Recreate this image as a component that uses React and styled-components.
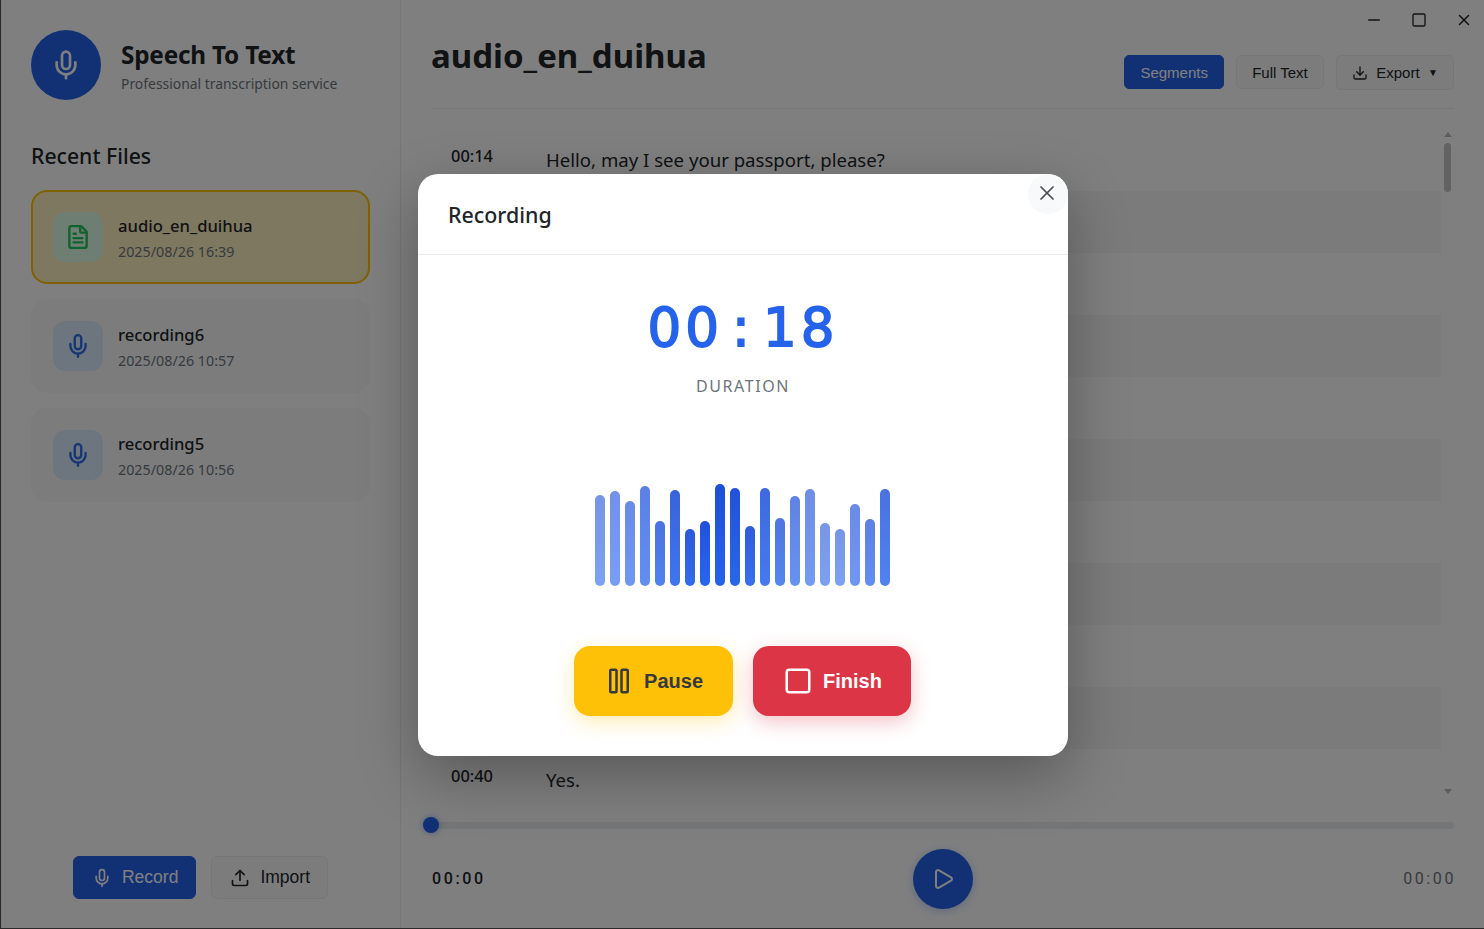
import styled, { createGlobalStyle } from "styled-components";
import { Mic, FileText, Download, Upload, Play, Pause, Square, X, Minus } from "lucide-react";

const files = [
  { name: "audio_en_duihua", date: "2025/08/26 16:39", kind: "audio", active: true },
  { name: "recording6", date: "2025/08/26 10:57", kind: "mic" },
  { name: "recording5", date: "2025/08/26 10:56", kind: "mic" },
];

// rows between these two sit behind the dialog
const segments = [
  ["00:14", "Hello, may I see your passport, please?"],
  [], [], [], [], [], [], [], [], [],
  ["00:40", "Yes."],
];

const bars = [
  [91, 0.6], [95, 0.62], [85, 0.66], [100, 0.72], [65, 0.8],
  [96, 0.88], [57, 0.94], [65, 0.98], [102, 1], [98, 0.98],
  [60, 0.92], [98, 0.85], [68, 0.78], [90, 0.7], [97, 0.64],
  [63, 0.6], [57, 0.6], [82, 0.66], [67, 0.72], [97, 0.8],
];

function App() {
  return (
    <>
      <GlobalStyle />
      <Window>
        <Sidebar>
          <Brand>
            <Logo>
              <Mic size={32} strokeWidth={2} />
            </Logo>
            <BrandText>
              <BrandName>Speech To Text</BrandName>
              <BrandSub>Professional transcription service</BrandSub>
            </BrandText>
          </Brand>
          <SectionTitle>Recent Files</SectionTitle>
          <FileList>
            {files.map((f) => (
              <FileCard key={f.name} $active={f.active}>
                <FileIcon $kind={f.kind}>
                  {f.kind === "audio" ? (
                    <FileText size={26} strokeWidth={2.2} />
                  ) : (
                    <Mic size={26} strokeWidth={2.2} />
                  )}
                </FileIcon>
                <FileMeta>
                  <FileName>{f.name}</FileName>
                  <FileDate>{f.date}</FileDate>
                </FileMeta>
              </FileCard>
            ))}
          </FileList>
          <SideActions>
            <SideButton $primary>
              <Mic size={20} />
              Record
            </SideButton>
            <SideButton>
              <Upload size={20} />
              Import
            </SideButton>
          </SideActions>
        </Sidebar>

        <Main>
          <WindowControls>
            <Minus size={18} />
            <Square size={16} />
            <X size={18} />
          </WindowControls>
          <Header>
            <Title>audio_en_duihua</Title>
            <HeaderActions>
              <ViewButton $primary>Segments</ViewButton>
              <ViewButton>Full Text</ViewButton>
              <ViewButton $tall>
                <Download size={16} />
                Export
                <Caret>▼</Caret>
              </ViewButton>
            </HeaderActions>
          </Header>
          <Transcript>
            <Rows>
              {segments.map(([time, text], i) => (
                <Row key={i} $striped={i % 2 === 1}>
                  <RowTime>{time}</RowTime>
                  <RowText>{text}</RowText>
                </Row>
              ))}
            </Rows>
            <ScrollBar>
              <ArrowUp />
              <Thumb />
              <ArrowDown />
            </ScrollBar>
          </Transcript>
          <Player>
            <SeekTrack>
              <SeekThumb />
            </SeekTrack>
            <PlayerRow>
              <Time>00:00</Time>
              <PlayButton>
                <Play size={24} />
              </PlayButton>
              <Time $muted>00:00</Time>
            </PlayerRow>
          </Player>
        </Main>

        <Overlay>
          <Modal>
            <ModalHeader>
              <ModalTitle>Recording</ModalTitle>
              <CloseButton>
                <X size={24} strokeWidth={1.75} />
              </CloseButton>
            </ModalHeader>
            <ModalBody>
              <Timer>
                00<TimerColon>:</TimerColon>18
              </Timer>
              <TimerLabel>DURATION</TimerLabel>
              <Wave>
                {bars.map(([h, o], i) => (
                  <WaveBar key={i} style={{ height: h, opacity: o }} />
                ))}
              </Wave>
              <ModalActions>
                <RecordButton $kind="pause">
                  <Pause size={30} />
                  Pause
                </RecordButton>
                <RecordButton $kind="finish">
                  <Square size={30} />
                  Finish
                </RecordButton>
              </ModalActions>
            </ModalBody>
          </Modal>
        </Overlay>
      </Window>
    </>
  );
}

const GlobalStyle = createGlobalStyle`
  * {
    box-sizing: border-box;
  }
  html,
  body {
    margin: 0;
    height: 100%;
    overflow: hidden;
    background: #fff;
    font-family: "Noto Sans", "Open Sans", sans-serif;
    color: #212529;
  }
  #root {
    height: 100%;
  }
`;

const Window = styled.div`
  position: relative;
  display: flex;
  height: 929px;
  background: #fff;
  border-left: 1px solid #555;
  border-bottom: 1px solid #555;
`;

const Sidebar = styled.aside`
  width: 400px;
  flex: none;
  display: flex;
  flex-direction: column;
  padding: 30px 30px 29px;
  border-right: 1px solid #e9ecef;
`;

const Brand = styled.div`
  display: flex;
  align-items: center;
  gap: 20px;
`;

const Logo = styled.div`
  width: 70px;
  height: 70px;
  border-radius: 50%;
  background: #2563eb;
  color: #fff;
  display: flex;
  align-items: center;
  justify-content: center;
`;

const BrandText = styled.div`
  padding-top: 5px;
`;

const BrandName = styled.div`
  font-size: 24.3px;
  font-weight: 700;
  line-height: 32px;
  letter-spacing: -0.2px;
`;

const BrandSub = styled.div`
  margin-top: 1px;
  font-size: 13.9px;
  line-height: 24px;
  color: #6c757d;
`;

const SectionTitle = styled.h2`
  margin: 40px 0 18px;
  font-size: 21.2px;
  line-height: 32px;
  font-weight: 500;
`;

const FileList = styled.div`
  display: flex;
  flex-direction: column;
  gap: 15px;
  flex: 1;
`;

const FileCard = styled.div`
  height: 94px;
  display: flex;
  align-items: center;
  gap: 15px;
  padding: 0 20px;
  border-radius: 16px;
  border: 2px solid ${(p) => (p.$active ? "#ffc107" : "#f8f9fa")};
  background: ${(p) => (p.$active ? "#fff0c0" : "#f8f9fa")};
`;

const FileIcon = styled.div`
  width: 50px;
  height: 50px;
  border-radius: 12px;
  display: flex;
  align-items: center;
  justify-content: center;
  background: ${(p) => (p.$kind === "audio" ? "#dcfce7" : "#dbeafe")};
  color: ${(p) => (p.$kind === "audio" ? "#22c55e" : "#2f6fe8")};
`;

const FileMeta = styled.div`
  padding-top: 4px;
`;

const FileName = styled.div`
  font-size: 16.6px;
  line-height: 26px;
  font-weight: 500;
`;

const FileDate = styled.div`
  font-size: 14.3px;
  line-height: 26px;
  color: #6c757d;
`;

const SideActions = styled.div`
  display: flex;
  justify-content: center;
  gap: 15px;
`;

const SideButton = styled.button`
  height: 43px;
  display: flex;
  align-items: center;
  gap: 10px;
  padding: 0 17px 0 18px;
  border-radius: 6px;
  border: 1px solid ${(p) => (p.$primary ? "#2563eb" : "#e9ecef")};
  background: ${(p) => (p.$primary ? "#2563eb" : "#f8f9fa")};
  color: ${(p) => (p.$primary ? "#fff" : "#212529")};
  font-family: "Liberation Sans", Arial, sans-serif;
  font-size: 17.5px;
`;

const Main = styled.main`
  position: relative;
  flex: 1;
  min-width: 0;
  display: flex;
  flex-direction: column;
  padding: 0 30px 19px 30px;
`;

const WindowControls = styled.div`
  position: absolute;
  top: 11px;
  right: 11px;
  display: flex;
  align-items: center;
  gap: 28px;
  color: #212529;
`;

const Header = styled.header`
  height: 109px;
  flex: none;
  display: flex;
  justify-content: space-between;
  border-bottom: 1px solid #e9ecef;
`;

const Title = styled.h1`
  margin: 34px 0 0;
  font-size: 33px;
  line-height: 44px;
  font-weight: 700;
`;

const HeaderActions = styled.div`
  display: flex;
  align-items: flex-start;
  gap: 12px;
  padding-top: 55px;
`;

const ViewButton = styled.button`
  height: ${(p) => (p.$tall ? "35px" : "34px")};
  min-width: ${(p) => (p.$primary ? "100px" : "0")};
  display: flex;
  align-items: center;
  justify-content: center;
  gap: ${(p) => (p.$tall ? "8.5px" : "8px")};
  padding: 0 15px;
  border-radius: 5px;
  border: 1px solid ${(p) => (p.$primary ? "#2563eb" : "#e9ecef")};
  background: ${(p) => (p.$primary ? "#2563eb" : "#f8f9fa")};
  color: ${(p) => (p.$primary ? "#fff" : "#212529")};
  font-family: "Liberation Sans", Arial, sans-serif;
  font-size: 15px;
`;

const Caret = styled.span`
  font-size: 10px;
`;

const Transcript = styled.div`
  flex: 1;
  min-height: 0;
  display: flex;
  margin-top: 20px;
`;

const Rows = styled.div`
  flex: 1;
  min-width: 0;
`;

const Row = styled.div`
  height: 62px;
  display: flex;
  align-items: center;
  padding: 0 20px;
  background: ${(p) => (p.$striped ? "#f6f6f6" : "transparent")};
`;

const RowTime = styled.div`
  width: 95px;
  font-size: 16.4px;
  font-weight: 500;
  margin-top: -10px;
`;

const RowText = styled.div`
  font-size: 18.6px;
  margin-top: -2px;
`;

const ScrollBar = styled.div`
  width: 13px;
  height: 665px;
  flex: none;
  display: flex;
  flex-direction: column;
  align-items: center;
`;

const ArrowUp = styled.div`
  margin-top: 3px;
  border: 4px solid transparent;
  border-top: 0;
  border-bottom: 5px solid #bbb;
`;

const Thumb = styled.div`
  width: 7px;
  height: 49px;
  margin-top: 6px;
  border-radius: 4px;
  background: #c4c4c4;
`;

const ArrowDown = styled.div`
  margin-top: auto;
  border: 4px solid transparent;
  border-bottom: 0;
  border-top: 5px solid #bbb;
`;

const Player = styled.div`
  flex: none;
  display: flex;
  flex-direction: column;
  gap: 20px;
`;

const SeekTrack = styled.div`
  position: relative;
  height: 7px;
  border-radius: 4px;
  background: #e9ecef;
`;

const SeekThumb = styled.div`
  position: absolute;
  left: -8px;
  top: -5px;
  width: 16px;
  height: 16px;
  border-radius: 50%;
  background: #2563eb;
  box-shadow: 0 0 6px rgba(37, 99, 235, 0.5);
`;

const PlayerRow = styled.div`
  display: flex;
  align-items: center;
  justify-content: space-between;
`;

const Time = styled.span`
  width: 100px;
  margin: -2px ${(p) => (p.$muted ? "-2px" : "-1px")} 0 ${(p) => (p.$muted ? "2px" : "1px")};
  font-family: Roboto, sans-serif;
  font-size: 16px;
  letter-spacing: 2.6px;
  font-weight: ${(p) => (p.$muted ? 400 : 500)};
  color: ${(p) => (p.$muted ? "#6c757d" : "#212529")};
  text-align: ${(p) => (p.$muted ? "right" : "left")};
`;

const PlayButton = styled.button`
  width: 60px;
  height: 60px;
  padding: 0;
  border: 0;
  border-radius: 50%;
  background: #2563eb;
  color: #fff;
  display: flex;
  align-items: center;
  justify-content: center;
  box-shadow: 0 2px 10px rgba(37, 99, 235, 0.3);
`;

const Overlay = styled.div`
  position: absolute;
  inset: 0 0 -1px -1px;
  background: rgba(0, 0, 0, 0.5);
  display: flex;
  align-items: flex-start;
  justify-content: center;
  padding: 174px 0 0 2px;
  z-index: 10;
`;

const Modal = styled.div`
  position: relative;
  width: 650px;
  height: 582px;
  background: #fff;
  border-radius: 20px;
  box-shadow: 0 20px 60px rgba(0, 0, 0, 0.3);
`;

const ModalHeader = styled.div`
  height: 81px;
  display: flex;
  align-items: center;
  padding: 0 30px;
  border-bottom: 1px solid #e9ecef;
`;

const ModalTitle = styled.h3`
  margin: 0;
  font-size: 21.4px;
  font-weight: 500;
  color: #212529;
`;

const CloseButton = styled.button`
  position: absolute;
  top: 0;
  right: 0;
  width: 40px;
  height: 40px;
  padding: 0 2px 2px 0;
  border: 0;
  border-radius: 50%;
  background: #f8f9fa;
  color: #495057;
  display: flex;
  align-items: center;
  justify-content: center;
`;

const ModalBody = styled.div`
  display: flex;
  flex-direction: column;
  align-items: center;
  padding-top: 42px;
`;

const Timer = styled.div`
  display: flex;
  font-family: "DejaVu Sans", sans-serif;
  font-size: 53px;
  line-height: 62px;
  letter-spacing: 4px;
  -webkit-text-stroke: 1.8px #2563eb;
  color: #2563eb;
`;

const TimerColon = styled.span`
  margin: 0 9px;
`;

const TimerLabel = styled.div`
  margin-top: 15px;
  font-size: 16px;
  line-height: 24px;
  letter-spacing: 1.6px;
  color: #6c757d;
`;

const Wave = styled.div`
  height: 102px;
  margin: 86px 1px 0 0;
  display: flex;
  align-items: flex-end;
  gap: 5px;
`;

const WaveBar = styled.div`
  width: 10px;
  border-radius: 5px;
  background: linear-gradient(180deg, #1d4ed8, #2563eb);
`;

const ModalActions = styled.div`
  display: flex;
  gap: 20px;
  margin: 60px 1px 0 0;
`;

const RecordButton = styled.button`
  height: 70px;
  display: flex;
  align-items: center;
  gap: 10px;
  padding: 0 ${(p) => (p.$kind === "pause" ? "30px" : "29px")} 0 30px;
  border: 0;
  border-radius: 16px;
  font-family: "Liberation Sans", Arial, sans-serif;
  font-size: 20px;
  font-weight: 700;
  background: ${(p) => (p.$kind === "pause" ? "#ffc107" : "#dc3545")};
  color: ${(p) => (p.$kind === "pause" ? "#343a40" : "#fff")};
  box-shadow: 0 6px 20px
    ${(p) => (p.$kind === "pause" ? "rgba(255, 193, 7, 0.3)" : "rgba(220, 53, 69, 0.3)")};
`;

export default App;
